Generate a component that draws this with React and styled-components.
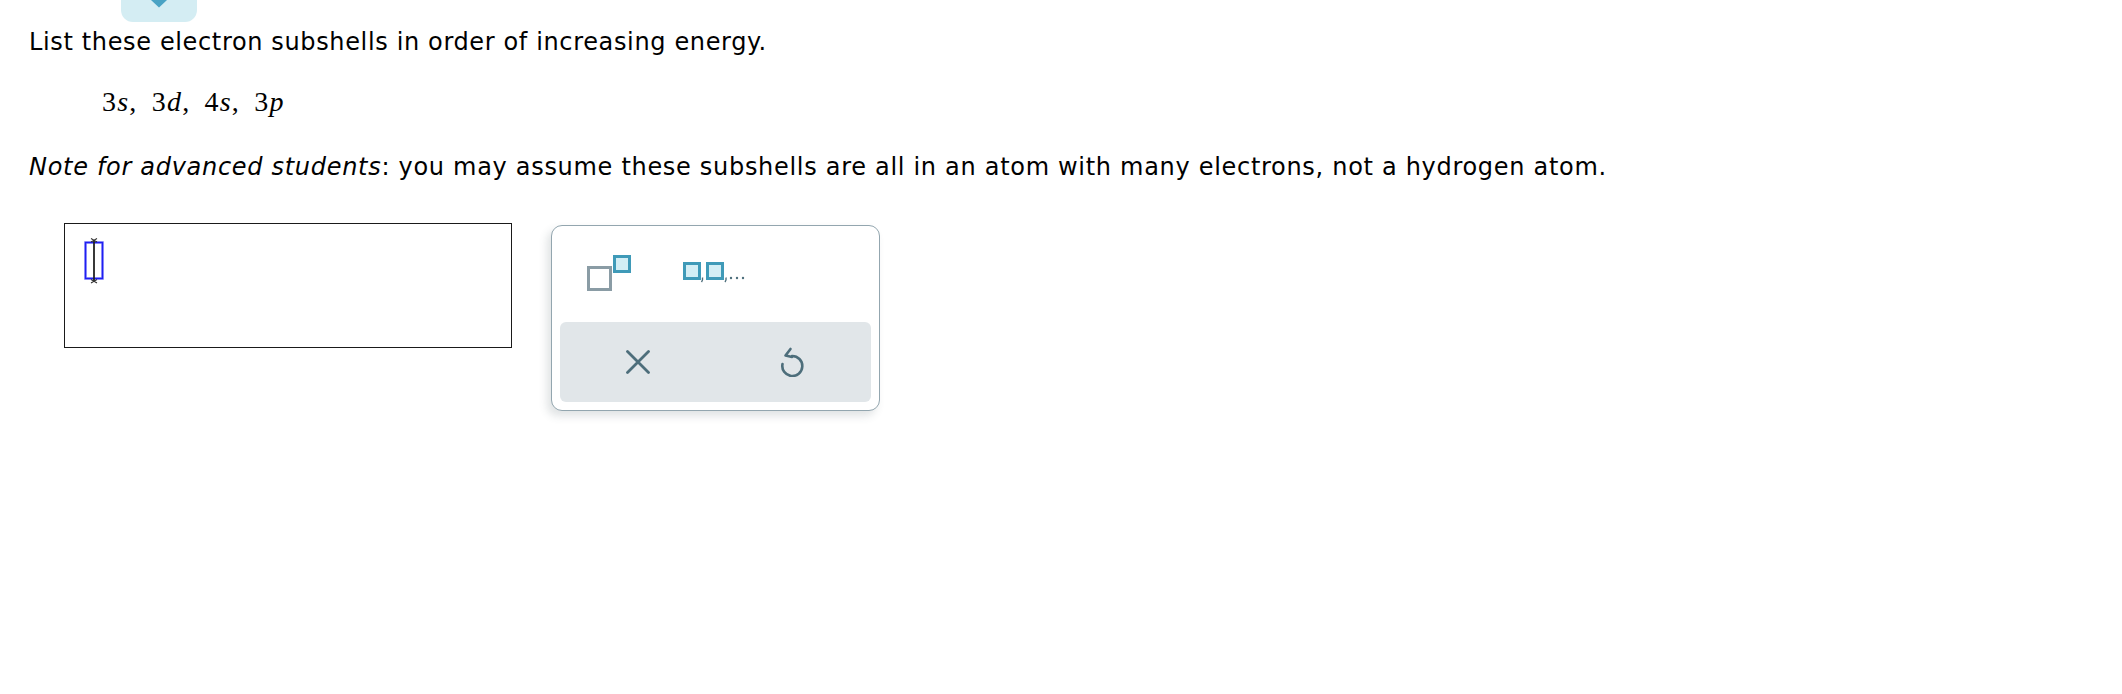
import React from 'react';
import styled, { createGlobalStyle } from 'styled-components';

const GlobalStyle = createGlobalStyle`
  html, body {
    margin: 0;
    padding: 0;
    background: #ffffff;
  }
  body {
    font-family: "DejaVu Sans", Verdana, sans-serif;
    color: #000;
  }
`;

const Page = styled.div`
  width: 2122px;
  height: 694px;
  padding: 0 0 0 29px;
  box-sizing: border-box;
`;

const TopTab = styled.div`
  width: 76px;
  height: 22px;
  margin-left: 92px;
  background: #d4edf3;
  border-radius: 0 0 12px 12px;
  display: flex;
  justify-content: center;
  align-items: flex-start;
`;

const Prompt = styled.p`
  margin: 6px 0 0 0;
  font-size: 24px;
  line-height: 28px;
  letter-spacing: 0.64px;
`;

const MathLine = styled.div`
  margin: 31px 0 0 73px;
  font-family: "Liberation Serif", "Times New Roman", serif;
  font-size: 28px;
  line-height: 30px;
  letter-spacing: 1.2px;
  word-spacing: 6px;
`;

const Var = styled.i`
  font-style: italic;
`;

const Note = styled.p`
  margin: 36px 0 0 0;
  font-size: 24px;
  line-height: 28px;
  letter-spacing: 0.7px;
`;

const Em = styled.i`
  font-style: italic;
`;

const AnswerRow = styled.div`
  display: flex;
  align-items: flex-start;
  margin: 42px 0 0 35px;
  gap: 39px;
`;

const AnswerBox = styled.div`
  width: 448px;
  height: 125px;
  border: 1px solid #1a1a1a;
  box-sizing: border-box;
  padding: 14px 0 0 19px;
`;

const Palette = styled.div`
  margin-top: 2px;
  width: 329px;
  height: 186px;
  box-sizing: border-box;
  border: 1px solid #93a6af;
  border-radius: 11px;
  background: #fff;
  box-shadow: -4px 5px 9px rgba(60, 80, 90, 0.16);
  padding: 0 8px 8px 8px;
  display: flex;
  flex-direction: column;
`;

const KeyRow = styled.div`
  display: flex;
  height: 96px;
  align-items: center;
  padding-left: 27px;
  gap: 50px;
`;

const Key = styled.button`
  border: none;
  background: transparent;
  padding: 0;
  display: flex;
  align-items: center;
  justify-content: center;
  cursor: pointer;
`;

const ActionBar = styled.div`
  flex: 1;
  background: #e1e6e9;
  border-radius: 6px;
  display: grid;
  grid-template-columns: 1fr 1fr;
  align-items: center;
`;

const ActionKey = styled(Key)`
  height: 100%;
`;

function Chevron() {
  return (
    <svg width="18" height="8" viewBox="0 0 18 8">
      <path d="M1 0 L9 7.5 L17 0 Z" fill="#4aa3c4" />
    </svg>
  );
}

function Cursor() {
  return (
    <svg width="22" height="46" viewBox="0 0 22 46">
      <rect x="1.5" y="4.5" width="17" height="36" fill="none" stroke="#8a8afa" strokeWidth="3" opacity="0.5" />
      <rect x="1.5" y="4.5" width="17" height="36" fill="none" stroke="#1f1ff2" strokeWidth="1.7" />
      <line x1="10" y1="2" x2="10" y2="43" stroke="#222" strokeWidth="1.8" />
      <path d="M7 0.5 L13 4 M13 0.5 L7 4 M7 41.5 L13 45 M13 41.5 L7 45" stroke="#333" strokeWidth="1.1" />
    </svg>
  );
}

function SuperscriptIcon() {
  return (
    <svg width="46" height="38" viewBox="0 0 46 38">
      <rect x="1.5" y="12.5" width="22" height="22" fill="#fff" stroke="#8a9ca5" strokeWidth="3" />
      <rect x="27.5" y="1.5" width="15" height="15" fill="#d3eef5" stroke="#3f9ab8" strokeWidth="3" />
    </svg>
  );
}

function ListIcon() {
  return (
    <svg width="66" height="24" viewBox="0 0 66 24">
      <rect x="1.5" y="1.5" width="15" height="15" fill="#d3eef5" stroke="#3f9ab8" strokeWidth="3" />
      <path d="M19.5 15.5 Q20 18 18.5 20" stroke="#4d6e7b" strokeWidth="1.4" fill="none" />
      <rect x="24.5" y="1.5" width="15" height="15" fill="#d3eef5" stroke="#3f9ab8" strokeWidth="3" />
      <path d="M43 15.5 Q43.5 18 42 20" stroke="#4d6e7b" strokeWidth="1.4" fill="none" />
      <circle cx="48" cy="16" r="1.2" fill="#4d6e7b" />
      <circle cx="54" cy="16" r="1.2" fill="#4d6e7b" />
      <circle cx="60" cy="16" r="1.2" fill="#4d6e7b" />
    </svg>
  );
}

function ClearIcon() {
  return (
    <svg width="24" height="24" viewBox="0 0 24 24">
      <path d="M1.5 1.5 L22.5 22.5 M22.5 1.5 L1.5 22.5" stroke="#4d6e7b" strokeWidth="2.8" strokeLinecap="round" />
    </svg>
  );
}

function UndoIcon() {
  return (
    <svg width="26" height="30" viewBox="0 0 26 30">
      <path d="M12 9 A10 10 0 1 1 2.5 17" fill="none" stroke="#4d6e7b" strokeWidth="2.6" strokeLinecap="round" />
      <path d="M10.5 2 L5.5 8.5 L12 10" fill="none" stroke="#4d6e7b" strokeWidth="2.6" strokeLinecap="round" strokeLinejoin="round" />
    </svg>
  );
}

export default function App() {
  return (
    <>
      <GlobalStyle />
      <Page>
        <TopTab>
          <Chevron />
        </TopTab>
        <Prompt>List these electron subshells in order of increasing energy.</Prompt>
        <MathLine>
          3<Var>s</Var>, 3<Var>d</Var>, 4<Var>s</Var>, 3<Var>p</Var>
        </MathLine>
        <Note>
          <Em>Note for advanced students</Em>: you may assume these subshells are all in an atom with many electrons, not a hydrogen atom.
        </Note>
        <AnswerRow>
          <AnswerBox>
            <Cursor />
          </AnswerBox>
          <Palette>
            <KeyRow>
              <Key aria-label="superscript">
                <SuperscriptIcon />
              </Key>
              <Key aria-label="list">
                <ListIcon />
              </Key>
            </KeyRow>
            <ActionBar>
              <ActionKey aria-label="clear">
                <ClearIcon />
              </ActionKey>
              <ActionKey aria-label="undo">
                <UndoIcon />
              </ActionKey>
            </ActionBar>
          </Palette>
        </AnswerRow>
      </Page>
    </>
  );
}
